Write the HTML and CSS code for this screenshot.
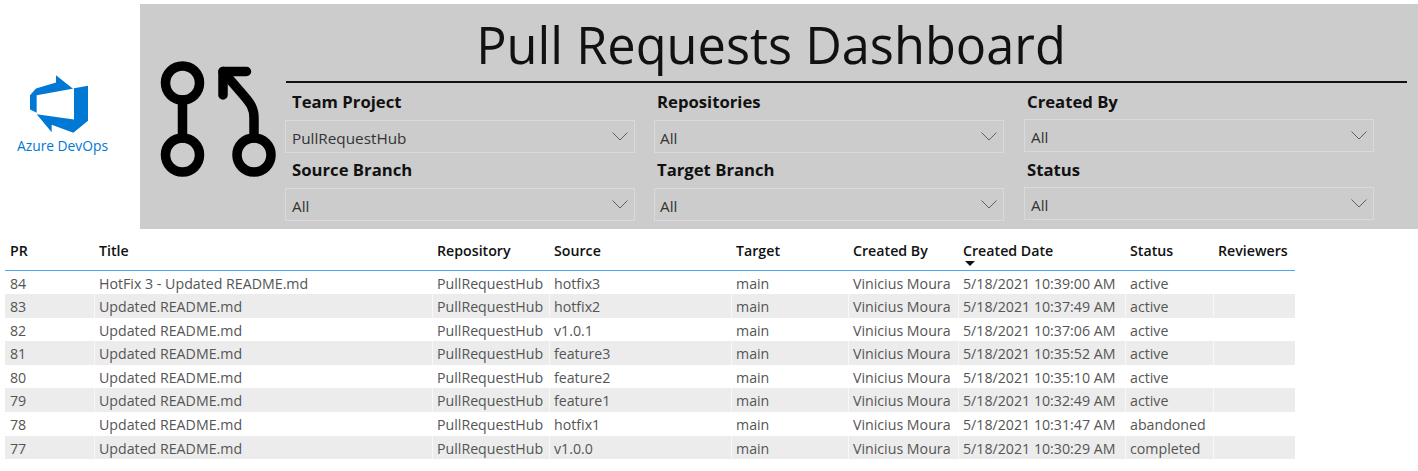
FILE: index.html
```html
<!DOCTYPE html>
<html>
<head>
  <meta charset="UTF-8">
  <title>Pull Requests Dashboard</title>
  <link rel="stylesheet" href="styles.css">
</head>
<body>

  <div class="top">
    <div class="brand">
      <svg class="brand-logo" viewBox="90 75 174 173">
        <path fill="#0078d4" d="M168 75 L218 115 L264 107 L264 212 L220 248 L155 224 L155 246 L110 192 L222 208 L222 115 L110 135 L110 188 L90 178 L90 135 L108 115 L168 97 Z"/>
      </svg>
      <div class="brand-name">Azure DevOps</div>
    </div>

    <div class="panel">
      <h1 class="title">Pull Requests Dashboard</h1>

      <svg class="pr-icon" viewBox="160 60 116 118">
        <g fill="none" stroke="#000" stroke-width="9.5" stroke-linecap="round" stroke-linejoin="round">
          <circle cx="182.5" cy="83" r="17"/>
          <circle cx="182.5" cy="155" r="17"/>
          <circle cx="254" cy="155" r="17"/>
          <path d="M182.5 100 V138"/>
          <path d="M254 138 V118 C254 108 250 103 245 97 L223 71.5"/>
          <path d="M246.5 71.5 H223 V95"/>
        </g>
      </svg>

      <div class="filters">
        <div class="filter">
          <label>Team Project</label>
          <div class="select"><span>PullRequestHub</span>
            <svg class="chev" viewBox="0 0 16 9"><path d="M.5 .5 L8 8 L15.5 .5"/></svg></div>
        </div>
        <div class="filter">
          <label>Repositories</label>
          <div class="select"><span>All</span>
            <svg class="chev" viewBox="0 0 16 9"><path d="M.5 .5 L8 8 L15.5 .5"/></svg></div>
        </div>
        <div class="filter">
          <label>Created By</label>
          <div class="select"><span>All</span>
            <svg class="chev" viewBox="0 0 16 9"><path d="M.5 .5 L8 8 L15.5 .5"/></svg></div>
        </div>
        <div class="filter">
          <label>Source Branch</label>
          <div class="select"><span>All</span>
            <svg class="chev" viewBox="0 0 16 9"><path d="M.5 .5 L8 8 L15.5 .5"/></svg></div>
        </div>
        <div class="filter">
          <label>Target Branch</label>
          <div class="select"><span>All</span>
            <svg class="chev" viewBox="0 0 16 9"><path d="M.5 .5 L8 8 L15.5 .5"/></svg></div>
        </div>
        <div class="filter">
          <label>Status</label>
          <div class="select"><span>All</span>
            <svg class="chev" viewBox="0 0 16 9"><path d="M.5 .5 L8 8 L15.5 .5"/></svg></div>
        </div>
      </div>
    </div>
  </div>

  <div class="grid">
    <div class="row head">
      <div>PR</div><div>Title</div><div>Repository</div><div>Source</div><div>Target</div><div>Created By</div>
      <div class="sorted">Created Date</div><div>Status</div><div>Reviewers</div>
    </div>
    <div class="row">
      <div>84</div><div>HotFix 3 - Updated README.md</div><div>PullRequestHub</div><div>hotfix3</div><div>main</div><div>Vinicius Moura</div><div>5/18/2021 10:39:00 AM</div><div>active</div><div></div>
    </div>
    <div class="row">
      <div>83</div><div>Updated README.md</div><div>PullRequestHub</div><div>hotfix2</div><div>main</div><div>Vinicius Moura</div><div>5/18/2021 10:37:49 AM</div><div>active</div><div></div>
    </div>
    <div class="row">
      <div>82</div><div>Updated README.md</div><div>PullRequestHub</div><div>v1.0.1</div><div>main</div><div>Vinicius Moura</div><div>5/18/2021 10:37:06 AM</div><div>active</div><div></div>
    </div>
    <div class="row">
      <div>81</div><div>Updated README.md</div><div>PullRequestHub</div><div>feature3</div><div>main</div><div>Vinicius Moura</div><div>5/18/2021 10:35:52 AM</div><div>active</div><div></div>
    </div>
    <div class="row">
      <div>80</div><div>Updated README.md</div><div>PullRequestHub</div><div>feature2</div><div>main</div><div>Vinicius Moura</div><div>5/18/2021 10:35:10 AM</div><div>active</div><div></div>
    </div>
    <div class="row">
      <div>79</div><div>Updated README.md</div><div>PullRequestHub</div><div>feature1</div><div>main</div><div>Vinicius Moura</div><div>5/18/2021 10:32:49 AM</div><div>active</div><div></div>
    </div>
    <div class="row">
      <div>78</div><div>Updated README.md</div><div>PullRequestHub</div><div>hotfix1</div><div>main</div><div>Vinicius Moura</div><div>5/18/2021 10:31:47 AM</div><div>abandoned</div><div></div>
    </div>
    <div class="row">
      <div>77</div><div>Updated README.md</div><div>PullRequestHub</div><div>v1.0.0</div><div>main</div><div>Vinicius Moura</div><div>5/18/2021 10:30:29 AM</div><div>completed</div><div></div>
    </div>
  </div>

</body>
</html>
```

FILE: styles.css
```css
body {
    margin: 0;
    padding-top: 4px;
    background: #fff;
    font-family: "Open Sans", "Noto Sans", sans-serif;
    overflow: hidden;
}

.top {
    display: flex;
    height: 225px;
}

.brand {
    width: 140px;
    flex: none;
    display: flex;
    flex-direction: column;
    align-items: center;
    padding-top: 71px;
    padding-right: 15px;
    box-sizing: border-box;
}

.brand-logo {
    width: 58px;
    height: 58px;
    margin-right: 7px;
}

.brand-name {
    margin-top: 3px;
    font-size: 13.8px;
    font-weight: 500;
    color: #0078d4;
    white-space: nowrap;
}

.panel {
    flex: 1;
    background: #ccc;
    display: grid;
    grid-template-columns: 145px 1fr;
    grid-template-rows: 77px 1fr;
}

.title {
    grid-column: 1 / 3;
    grid-row: 1;
    margin: 0;
    padding-right: 16px;
    text-align: center;
    font-size: 50.5px;
    font-weight: 400;
    line-height: 82px;
    color: #111;
    white-space: nowrap;
}

.pr-icon {
    grid-column: 1;
    grid-row: 1 / 3;
    width: 116px;
    height: 118px;
    margin: 56px 0 0 20px;
}

.filters {
    grid-column: 2;
    grid-row: 2;
    margin-right: 11px;
    margin-left: 1px;
    border-top: 2px solid #111;
    display: grid;
    grid-template-columns: 368px 370px 350px;
    align-content: start;
    height: 148px;
    box-sizing: border-box;
}

.filter {
    height: 68px;
}

.filter label {
    display: block;
    height: 37px;
    padding: 7px 0 0 6px;
    box-sizing: border-box;
    font-size: 16.7px;
    font-weight: 700;
    line-height: 24px;
    color: #111;
}

.filter:nth-child(3n+2) label,
.filter:nth-child(3n) label {
    padding-left: 3px;
}

.select {
    width: 350px;
    height: 33px;
    margin-left: -1px;
    border: 1px solid #dadada;
    box-sizing: border-box;
    display: flex;
    align-items: center;
    justify-content: space-between;
    padding: 3px 6px 0;
    font-size: 15.3px;
    color: #333;
}

.filter:nth-child(3n+2) .select {
    margin-left: 0;
    padding-left: 5px;
}

/* right column sits a pixel higher in the report */
.filter:nth-child(3n) .select {
    margin: -1px 0 0;
}

.chev {
    width: 16px;
    height: 9px;
    margin: -4px 0 0;
    fill: none;
    stroke: #444;
    stroke-width: .8;
}

.grid {
    margin: 3px 0 0 5px;
    width: 1290px;
    font-size: 14.2px;
    color: #555;
}

.row {
    display: grid;
    grid-template-columns: 89px 338px 117px 182px 117px 110px 167px 88px 82px;
    height: 23.6px;
    line-height: 23.6px;
}

.row > div {
    padding: 1px 0 0 4px;
    border-left: 1px solid transparent;
    box-sizing: border-box;
    white-space: nowrap;
}

.row:nth-child(odd):not(.head) {
    background: #ececec;
}

.row:nth-child(odd):not(.head) > div {
    border-left-color: #f8f8f8;
}

.row > div:first-child {
    border-left: 0;
    padding-left: 5px;
}

.head {
    height: 38.5px;
    line-height: 37px;
    font-weight: 600;
    color: #111;
    border-bottom: 1.5px solid #4aa8f0;
    box-sizing: border-box;
}

.head > div {
    padding-top: 0;
}

.sorted {
    position: relative;
}

.sorted::after {
    content: "";
    position: absolute;
    left: 6px;
    top: 29px;
    border-style: solid;
    border-width: 5px 5px 0;
    border-color: #111 transparent transparent;
}
```
